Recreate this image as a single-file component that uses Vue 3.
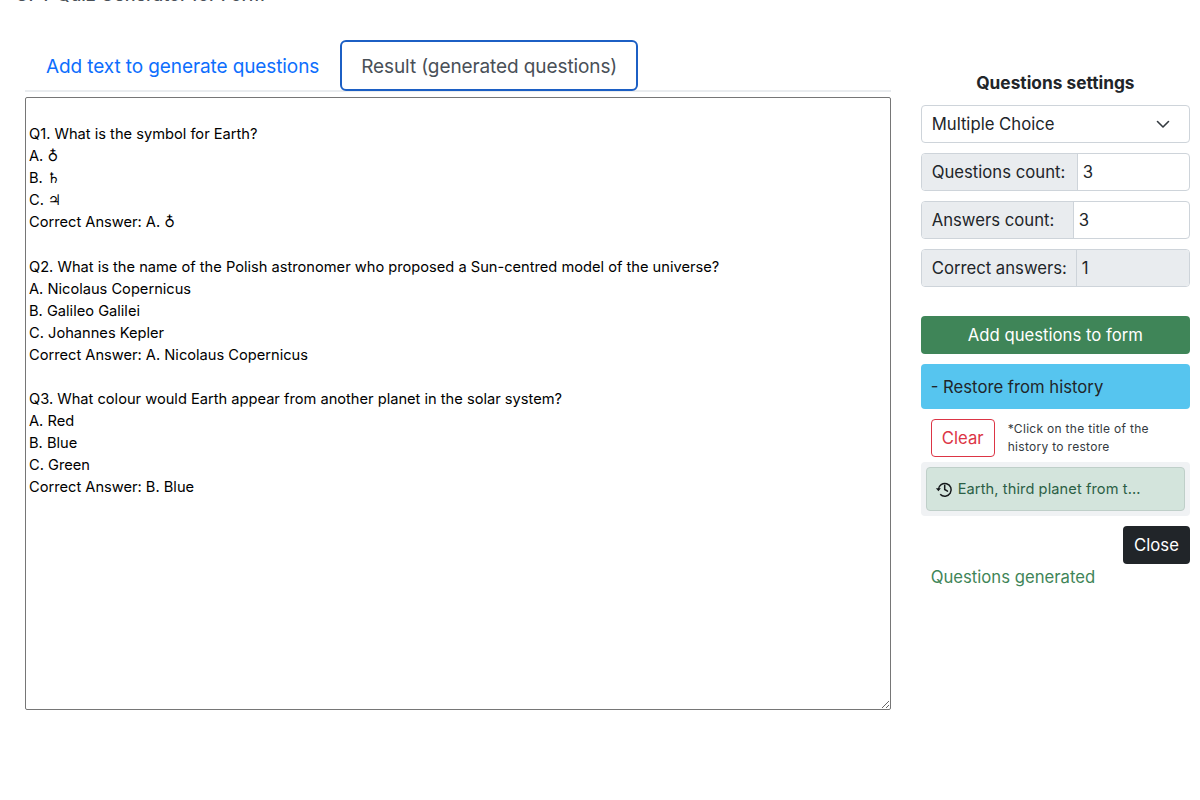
<script setup>
const text = `
Q1. What is the symbol for Earth?
A. ♁
B. ♄
C. ♃
Correct Answer: A. ♁

Q2. What is the name of the Polish astronomer who proposed a Sun-centred model of the universe?
A. Nicolaus Copernicus
B. Galileo Galilei
C. Johannes Kepler
Correct Answer: A. Nicolaus Copernicus

Q3. What colour would Earth appear from another planet in the solar system?
A. Red
B. Blue
C. Green
Correct Answer: B. Blue`
</script>

<template>
  <div class="page">
    <div class="title">GPT Quiz Generator for Form</div>
    <div class="columns">
      <main class="main">
        <nav class="tabs">
          <a class="tab link">Add text to generate questions</a>
          <a class="tab active">Result (generated questions)</a>
        </nav>
        <textarea class="result" :value="text" spellcheck="false"></textarea>
      </main>
      <aside class="side">
        <h2 class="side-title">Questions settings</h2>
        <div class="select">
          <span>Multiple Choice</span>
          <svg width="16" height="16" viewBox="0 0 16 16" fill="none"><path d="M2.5 5.5 8 11l5.5-5.5" stroke="#343a40" stroke-width="1.6" stroke-linecap="round" stroke-linejoin="round"/></svg>
        </div>
        <div class="group"><span class="addon a-q">Questions count:</span><span class="val">3</span></div>
        <div class="group"><span class="addon a-a">Answers count:</span><span class="val">3</span></div>
        <div class="group"><span class="addon a-c">Correct answers:</span><span class="val off">1</span></div>
        <button class="btn add">Add questions to form</button>
        <button class="btn restore">- Restore from history</button>
        <div class="clear-row">
          <button class="clear">Clear</button>
          <small class="hint">*Click on the title of the history to restore</small>
        </div>
        <div class="history">
          <div class="hist-item">
            <svg width="18" height="18" viewBox="0 0 18 18" fill="none" stroke="#16191c" stroke-width="1.5"><path d="M3.4 9.5A6.4 6.4 0 1 1 5.2 14.3"/><path d="M.9 8.3h5L3.4 11.2z" fill="#16191c" stroke="none"/><path d="M9.7 5.2v4.3l2.8 1.7" stroke-linecap="round"/></svg>
            <span>Earth, third planet from t...</span>
          </div>
        </div>
        <div class="close-row"><button class="close">Close</button></div>
        <div class="status">Questions generated</div>
      </aside>
    </div>
  </div>
</template>

<style>
html, body { overflow: hidden; background: #fff; }
</style>

<style scoped>
.page { height: 800px; overflow: hidden; font-family: Inter, "Liberation Sans", sans-serif; color: #212529; box-sizing: border-box; }
.title { height: 24px; margin-top: -17px; padding-left: 15px; font-size: 18px; line-height: 24px; font-weight: 500; color: #495057; white-space: nowrap; }
.columns { display: flex; gap: 29.7px; padding: 33px 10.7px 0 25px; }
.main { width: 866px; flex: none; }
.tabs { display: flex; height: 50px; padding-left: 1px; border-bottom: 2px solid #e9ecef; gap: 1px; }
.tab { height: 51px; box-sizing: border-box; display: flex; align-items: center; padding: 1px 20px 0; font-size: 19px; letter-spacing: -.1px; white-space: nowrap; }
.link { color: #0d6efd; }
.active { position: relative; z-index: 1; color: #495057; border: 2px solid #1c5fc4; border-radius: 6px; background: #fff; padding: 2px 19px 0; }
.result { display: block; box-sizing: border-box; width: 866px; height: 613px; margin-top: 5px; padding: 3px; border: 1px solid #767676; border-radius: 2px; font: 14.65px/22.08px Inter, "DejaVu Sans", sans-serif; color: #000; outline: none; }
.side { width: 269.3px; flex: none; display: flex; flex-direction: column; padding-top: 31px; }
.side-title { margin: 0 0 10px; height: 24px; text-align: center; font-size: 17.3px; line-height: 24px; font-weight: 700; white-space: nowrap; }
.select { height: 38px; box-sizing: border-box; border: 1px solid #ced4da; border-radius: 4px; display: flex; align-items: center; justify-content: space-between; padding: 0 18px 0 10px; font-size: 16.7px; }
.group { height: 38px; box-sizing: border-box; margin-top: 10px; display: flex; border: 1px solid #ced4da; border-radius: 4px; overflow: hidden; font-size: 16.7px; }
.addon { box-sizing: border-box; flex: none; background: #e9ecef; padding: 0 0 0 10px; display: flex; align-items: center; border-right: 1px solid #ced4da; white-space: nowrap; }
.a-q { width: 156px; }
.a-a { width: 152px; }
.a-c { width: 155px; }
.val { flex: 1; padding: 0 5px; display: flex; align-items: center; }
.off { background: #e9ecef; }
.btn { display: block; border: 0; border-radius: 4px; font-family: inherit; font-size: 16.7px; }
.add { height: 38px; margin-top: 29px; background: #3f8558; color: #fff; }
.restore { height: 45px; margin-top: 10px; background: #56c5ef; color: #212529; text-align: left; padding: 0 10px; }
.clear-row { display: flex; align-items: center; gap: 13px; padding: 10px 0 5px 10px; }
.clear { width: 64px; height: 38px; flex: none; background: #fff; border: 1px solid #dc3545; border-radius: 4px; color: #dc3545; font-family: inherit; font-size: 16.7px; padding: 0; }
.hint { width: 160px; font-size: 12px; line-height: 18.5px; letter-spacing: .3px; color: #343a40; }
.history { background: #f0f2f4; border-radius: 4px; padding: 5px; }
.hist-item { height: 44px; box-sizing: border-box; display: flex; align-items: center; gap: 5px; padding-left: 8px; background: #d3e4dc; border: 1px solid #bfcfc9; border-radius: 4px; color: #2b5f45; font-size: 14.6px; letter-spacing: .1px; }
.close-row { display: flex; justify-content: flex-end; margin-top: 10px; }
.close { width: 67px; height: 38px; background: #212529; border: 0; border-radius: 4px; color: #fff; font-family: inherit; font-size: 16.7px; padding: 0; }
.status { margin-top: 1px; padding-left: 10px; font-size: 16.7px; line-height: 24px; color: #3f8558; }
</style>
